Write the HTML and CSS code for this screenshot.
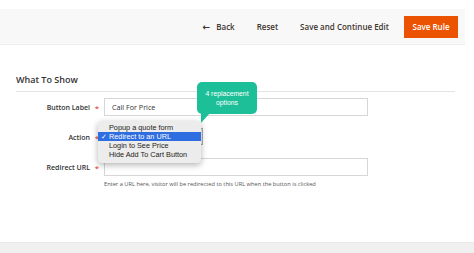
FILE: index.html
```html
<!DOCTYPE html>
<html lang="en">
<head>
    <meta charset="UTF-8">
    <title>Edit Rule</title>
    <link rel="stylesheet" href="styles.css">
</head>
<body>

<div class="page-actions">
    <button class="action back"><span class="arrow">&larr;</span> Back</button>
    <button class="action">Reset</button>
    <button class="action">Save and Continue Edit</button>
    <button class="action primary">Save Rule</button>
</div>

<div class="fieldset">
    <h3 class="legend">What To Show</h3>

    <div class="field">
        <label>Button Label</label>
        <span class="required">*</span>
        <input type="text" value="Call For Price">
    </div>

    <div class="field">
        <label>Action</label>
        <span class="required">*</span>
        <div class="select-wrap">
            <div class="select"></div>
            <ul class="dropdown">
                <li>Popup a quote form</li>
                <li class="selected"><span class="check">&#10003;</span>Redirect to an URL</li>
                <li>Login to See Price</li>
                <li>Hide Add To Cart Button</li>
            </ul>
            <div class="tip">4 replacement<br>options</div>
        </div>
    </div>

    <div class="field">
        <label>Redirect URL</label>
        <span class="required">*</span>
        <input type="text">
    </div>
    <p class="note">Enter a URL here, visitor will be redirected to this URL when the button is clicked</p>
</div>

<div class="footer"></div>

</body>
</html>
```

FILE: styles.css
```css
body {
    font-family: 'Open Sans', sans-serif;
    color: #333;
    background: #fff;
    margin: 0;
    padding: 0;
    width: 474px;
    height: 253px;
    overflow: hidden;
    position: relative;
}
.page-actions {
    margin-top: 9px;
    width: 465px;
    height: 36px;
    background: #f8f8f8;
    border-bottom: 1px solid #eee;
    box-sizing: border-box;
    display: flex;
    justify-content: flex-end;
    align-items: center;
    padding-right: 7px;
}
.action {
    font-family: inherit;
    font-size: 8px;
    font-weight: 600;
    color: #41362f;
    background: none;
    border: none;
    padding: 0 11px;
    cursor: pointer;
}
.action .arrow {
    font-family: 'DejaVu Sans', sans-serif;
    font-size: 9px;
    font-weight: bold;
    margin-right: 4px;
}
.action.primary {
    background: #eb5202;
    color: #fff;
    height: 22px;
    width: 54px;
    padding: 0;
    margin-left: 4px;
}
.fieldset {
    padding-left: 16px;
    margin-top: 28px;
}
.legend {
    font-size: 9px;
    font-weight: 600;
    margin: 0;
    width: 439px;
    padding-bottom: 5px;
    border-bottom: 1px solid #e3e3e3;
}
.field {
    display: flex;
    align-items: center;
    margin-top: 6px;
    height: 18px;
}
.field + .field {
    margin-top: 12px;
}
.field label {
    width: 74px;
    text-align: right;
    font-size: 7px;
    font-weight: 600;
}
.required {
    color: #e22626;
    font-size: 8px;
    width: 14px;
    text-align: center;
}
.field input {
    width: 264px;
    height: 18px;
    box-sizing: border-box;
    border: 1px solid #d6d6d6;
    font-family: inherit;
    font-size: 7.2px;
    padding: 0 7px;
    margin: 0;
    color: #333;
}
.select-wrap {
    position: relative;
    width: 100px;
    height: 18px;
}
.select {
    position: absolute;
    left: -3px;
    top: 0;
    width: 102px;
    height: 17px;
    border: 1px solid #adadad;
    background: #eee;
    box-sizing: border-box;
}
.dropdown {
    position: absolute;
    left: -6px;
    top: -7px;
    width: 103px;
    margin: 0;
    padding: 2px 0 4px;
    list-style: none;
    background: #ececec;
    border-radius: 4px;
    box-shadow: 0 2px 6px rgba(0,0,0,0.3);
    font-family: 'Liberation Sans', sans-serif;
    font-size: 7.3px;
    color: #222;
}
.dropdown li {
    height: 9px;
    line-height: 9px;
    padding-left: 11px;
    position: relative;
}
.dropdown li.selected {
    background: #2f6ee0;
    color: #fff;
}
.check {
    position: absolute;
    left: 3px;
}
.tip {
    position: absolute;
    left: 93px;
    top: -46px;
    width: 60px;
    height: 32px;
    box-sizing: border-box;
    background: #1dbf99;
    color: #fff;
    border-radius: 5px;
    font-family: 'Liberation Sans', sans-serif;
    font-size: 6.8px;
    line-height: 9px;
    text-align: center;
    padding-top: 7px;
}
.tip::after {
    content: '';
    position: absolute;
    left: 4px;
    bottom: -9px;
    border-top: 10px solid #1dbf99;
    border-right: 9px solid transparent;
}
.note {
    margin: 4px 0 0 88px;
    font-size: 5.7px;
    color: #555;
}
.footer {
    position: absolute;
    left: 0;
    top: 242px;
    width: 474px;
    height: 11px;
    background: #f0f0f0;
    border-top: 1px solid #e8e8e8;
}
```
